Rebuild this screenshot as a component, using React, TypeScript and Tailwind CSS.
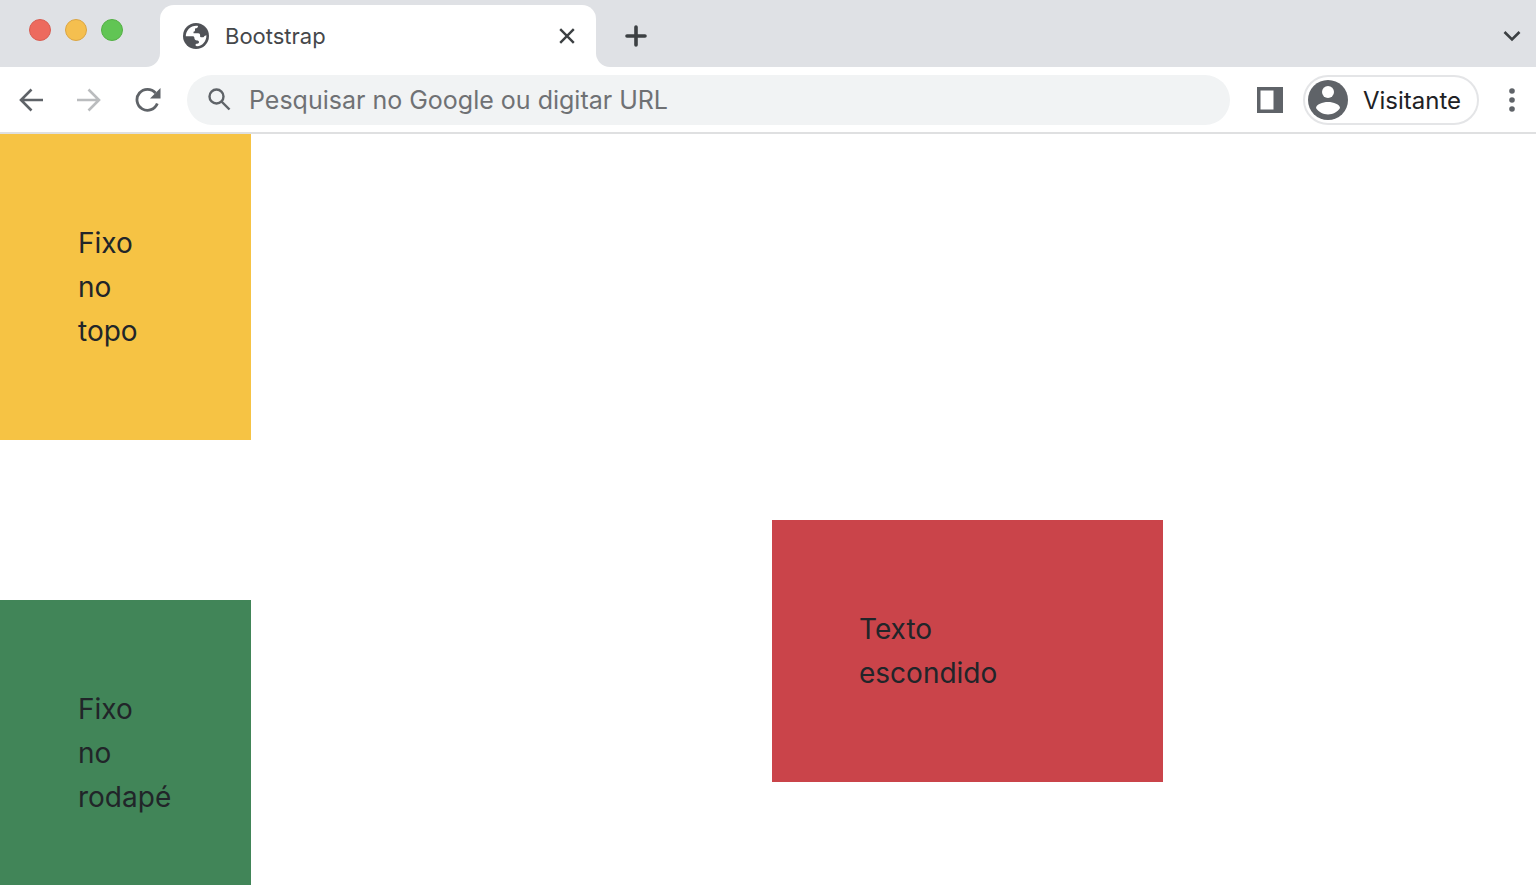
function TrafficLights() {
	return (
		<div className="flex gap-[14px] pl-[29px] pt-[19px]">
			<button
				aria-label="Fechar"
				className="size-[22px] rounded-full border border-[#d85e53] bg-[#ed6a5e]"
			/>
			<button
				aria-label="Minimizar"
				className="size-[22px] rounded-full border border-[#dba543] bg-[#f5bf4f]"
			/>
			<button
				aria-label="Maximizar"
				className="size-[22px] rounded-full border border-[#54b045] bg-[#61c554]"
			/>
		</div>
	)
}

function GlobeIcon() {
	return (
		<svg viewBox="0 0 26 26" className="size-[26px] shrink-0">
			<circle cx="13" cy="13" r="13" fill="#505257" />
			<path
				fill="#fff"
				d="M2.800 13.200C2.800 7.500 7.500 2.700 13.300 2.700c.8 0 1.400.1 1.700.3 0 1.500-.8 2.300-3 2.500v1.700c0 .8-.4 1.300-1.500 1.500v1.500h4.700c1.300 0 1.900.8 1.900 1.900v1.400c0 .5.400.8.9.8h1.600c1 0 1.600-.5 1.800-1.300l2-.7c.1 5.800-3.700 10.700-9.400 11-1 0-1.500-.5-1.500-1.200 0-.9.7-1.400 1.600-1.400 1.200 0 1.900-.6 1.900-1.600 0-1.100-.7-1.700-1.900-1.700-1.700 0-2.700-.9-2.700-2.300 0-1.300-.7-1.900-1.900-1.900z"
			/>
		</svg>
	)
}

function TabStrip() {
	return (
		<div className="flex h-[67px] bg-[#dfe1e5]">
			<div className="w-[146px]">
				<TrafficLights />
			</div>
			<div className="size-[14px] self-end bg-white">
				<div className="size-[14px] rounded-br-[14px] bg-[#dfe1e5]" />
			</div>
			<div className="mt-[5px] flex w-[436px] items-center rounded-t-[14px] bg-white pl-[23px] pr-5">
				<GlobeIcon />
				<span className="ml-4 flex-1 text-[22px] text-[#45474a]">
					Bootstrap
				</span>
				<button aria-label="Fechar guia">
					<svg
						viewBox="0 0 18 18"
						className="size-[18px]"
						stroke="#3c4043"
						strokeWidth="2.400"
					>
						<path d="M2.200 2.200l13.600 13.600M15.800 2.200L2.200 15.800" />
					</svg>
				</button>
			</div>
			<div className="size-[14px] self-end bg-white">
				<div className="size-[14px] rounded-bl-[14px] bg-[#dfe1e5]" />
			</div>
			<button aria-label="Nova guia" className="ml-[15px] mt-[5px]">
				<svg
					viewBox="0 0 22 22"
					className="size-[22px]"
					stroke="#3c4043"
					strokeWidth="3.600"
					strokeLinecap="round"
				>
					<path d="M11 2v18M2 11h18" />
				</svg>
			</button>
			<button aria-label="Pesquisar guias" className="ml-auto mr-[15px] mt-[5px]">
				<svg
					viewBox="0 0 18 12"
					className="h-3 w-[18px]"
					fill="none"
					stroke="#3c4043"
					strokeWidth="2.600"
				>
					<path d="M1.500 2L9 9.500 16.500 2" />
				</svg>
			</button>
		</div>
	)
}

function Toolbar() {
	return (
		<div className="flex h-[67px] items-center border-b-2 border-[#dfe0e1] bg-white pl-[19px] pr-[21px]">
			<button aria-label="Voltar">
				<svg
					viewBox="0 0 24 24"
					className="size-6"
					fill="none"
					stroke="#5f6368"
					strokeWidth="2.600"
				>
					<path d="M24 12H2M12.500 1.500L2 12l10.500 10.500" />
				</svg>
			</button>
			<button aria-label="Avançar" className="ml-[34px]">
				<svg
					viewBox="0 0 24 24"
					className="size-6"
					fill="none"
					stroke="#babcbe"
					strokeWidth="2.600"
				>
					<path d="M0 12h22M11.500 1.500L22 12 11.500 22.500" />
				</svg>
			</button>
			<button aria-label="Recarregar" className="ml-[34px]">
				<svg viewBox="0 0 26 26" className="size-[26px]">
					<path
						fill="none"
						stroke="#5f6368"
						strokeWidth="2.800"
						d="M22.300 16.500A10.500 10.500 0 1 1 20.500 6"
					/>
					<path fill="#5f6368" d="M25.500 1v10.500H15z" />
				</svg>
			</button>
			<label className="ml-[26px] flex h-[50px] flex-1 items-center rounded-full bg-[#f1f3f4] pl-[21px]">
				<svg
					viewBox="0 0 23 23"
					className="size-[23px] shrink-0"
					fill="none"
					stroke="#5f6368"
					strokeWidth="2.400"
				>
					<circle cx="8.500" cy="8.500" r="7" />
					<path d="M13.500 13.500l8 8" />
				</svg>
				<input
					type="text"
					aria-label="Pesquisar"
					placeholder="Pesquisar no Google ou digitar URL"
					className="ml-[18px] min-w-0 flex-1 bg-transparent pt-[2px] text-[25px] outline-none placeholder:text-[#6f7174]"
				/>
			</label>
			<button aria-label="Painel lateral" className="ml-[27px]">
				<svg viewBox="0 0 26 26" className="size-[26px]">
					<path
						fill="#5f6368"
						fillRule="evenodd"
						d="M0 0h26v26H0zM3.500 3.500v19h13v-19z"
					/>
				</svg>
			</button>
			<button className="ml-5 flex h-[50px] items-center rounded-full border-2 border-[#e4e5e7] pl-[3px] pr-4">
				<svg viewBox="0 0 40 40" className="size-10">
					<circle cx="20" cy="20" r="20" fill="#5f6368" />
					<circle cx="20" cy="12" r="6" fill="#fff" />
					<path
						fill="#fff"
						d="M20 22c5.500 0 12 2.500 12 6-2.600 4-7 6.400-12 6.400S10.600 32 8 28c0-3.500 6.500-6 12-6z"
					/>
				</svg>
				<span className="ml-[15px] pt-[2px] text-[24px] text-[#202124]">
					Visitante
				</span>
			</button>
			<button aria-label="Mais" className="ml-[30px]">
				<svg viewBox="0 0 6 24" className="h-6 w-[6px]" fill="#5f6368">
					<circle cx="3" cy="3" r="2.800" />
					<circle cx="3" cy="12" r="2.800" />
					<circle cx="3" cy="21" r="2.800" />
				</svg>
			</button>
		</div>
	)
}

export default function App() {
	return (
		<div className="flex h-screen flex-col overflow-hidden bg-white font-['Inter',sans-serif]">
			<header className="shrink-0">
				<TabStrip />
				<Toolbar />
			</header>
			<main className="grid grid-cols-2 items-start text-[28px] leading-[44px] text-[#212529]">
				<div className="flex w-[251px] flex-col gap-[160px]">
					<div className="bg-[#f6c344] px-[78px] py-[87px]">
						Fixo no topo
					</div>
					<div className="bg-[#418558] px-[78px] py-[87px]">
						Fixo no rodapé
					</div>
				</div>
				<div className="ml-1 mt-[386px] w-[391px] bg-[#ca444a] p-[87px]">
					Texto escondido
				</div>
			</main>
		</div>
	)
}
